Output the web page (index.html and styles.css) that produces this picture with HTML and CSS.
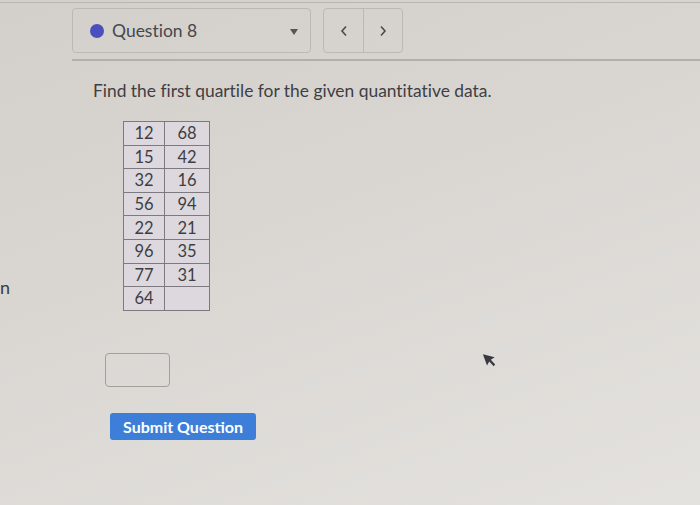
FILE: index.html
```html
<!DOCTYPE html>
<html>
<head>
<meta charset="utf-8">
<link rel="stylesheet" href="styles.css">
</head>
<body>
<div class="page">
  <div class="topline"></div>
  <div class="header">
    <div class="qselect">
      <span class="dot"></span>
      <span class="qtitle">Question 8</span>
      <span class="caret"></span>
    </div>
    <div class="nav">
      <div class="navbtn"><svg width="8" height="12" viewBox="0 0 8 12"><path d="M6 1.5 L2 6 L6 10.5" fill="none" stroke="#4a4a50" stroke-width="1.6"/></svg></div>
      <div class="navbtn"><svg width="8" height="12" viewBox="0 0 8 12"><path d="M2 1.5 L6 6 L2 10.5" fill="none" stroke="#4a4a50" stroke-width="1.6"/></svg></div>
    </div>
  </div>
  <div class="rule"></div>
  <div class="content">
    <p class="question">Find the first quartile for the given quantitative data.</p>
    <table class="data">
      <tr><td>12</td><td>68</td></tr>
      <tr><td>15</td><td>42</td></tr>
      <tr><td>32</td><td>16</td></tr>
      <tr><td>56</td><td>94</td></tr>
      <tr><td>22</td><td>21</td></tr>
      <tr><td>96</td><td>35</td></tr>
      <tr><td>77</td><td>31</td></tr>
      <tr><td>64</td><td></td></tr>
    </table>
    <div class="answer"></div>
    <button class="submit">Submit Question</button>
  </div>
  <span class="edge">n</span>
  <svg class="cursor" width="14" height="18" viewBox="0 0 14 18"><path d="M2 2 L12 9 L7.5 10 L10 16 L8 17 L5.5 11 L2 14 Z" fill="#3a3a3e" transform="rotate(-20 7 9)"/></svg>
</div>
</body>
</html>
```
FILE: styles.css
```css
html, body {
  margin: 0;
  padding: 0;
}
body {
  width: 700px;
  height: 505px;
  overflow: hidden;
  background: linear-gradient(160deg, #d3cfcb 0%, #d9d6d2 40%, #e4e2de 100%);
  font-family: Lato, "Open Sans", sans-serif;
  font-variant-ligatures: none;
  color: #3c3c40;
}
.page {
  position: relative;
  width: 700px;
  height: 505px;
}
.topline {
  height: 2px;
  border-bottom: 1px solid #b9b5b1;
}
.header {
  display: flex;
  padding-left: 72px;
  margin-top: 5px;
  height: 46px;
}
.qselect {
  box-sizing: border-box;
  width: 239px;
  height: 45px;
  border: 1px solid #bcb8b4;
  border-radius: 4px;
  display: flex;
  align-items: center;
  padding-left: 17px;
  padding-right: 12px;
}
.dot {
  width: 14px;
  height: 14px;
  border-radius: 50%;
  background: #4b4fbe;
  margin-right: 8px;
}
.qtitle {
  font-size: 17.5px;
  color: #47474c;
  flex: 1;
}
.caret {
  width: 0;
  height: 0;
  border-left: 4px solid transparent;
  border-right: 4px solid transparent;
  border-top: 6px solid #55555a;
  margin-top: 3px;
}
.nav {
  display: flex;
  margin-left: 12px;
  box-sizing: border-box;
  height: 45px;
  border: 1px solid #bcb8b4;
  border-radius: 4px;
}
.navbtn {
  width: 39px;
  display: flex;
  align-items: center;
  justify-content: center;
  box-sizing: border-box;
}
.navbtn + .navbtn {
  border-left: 1px solid #bcb8b4;
}
.rule {
  margin-left: 72px;
  margin-top: 5px;
  border-top: 2px solid #b3afab;
}
.content {
  padding-left: 93px;
}
.question {
  margin: 18px 0 0 0;
  font-size: 17.4px;
  line-height: 24px;
  color: #3e3e44;
}
.data {
  margin-top: 18px;
  margin-left: 30px;
  border-collapse: collapse;
  border: 1.5px solid #7c7a80;
}
.data td {
  border: 1px solid #7c7a80;
  background: #dcd8dd;
  height: 22.6px;
  padding: 0;
  text-align: center;
  font-size: 16.5px;
  line-height: 18px;
  color: #3e3e44;
}
.data td:first-child {
  width: 40px;
}
.data td:last-child {
  width: 44px;
}
.answer {
  margin-top: 42px;
  margin-left: 12px;
  width: 65px;
  height: 34px;
  box-sizing: border-box;
  border: 1.5px solid #a3a09c;
  border-radius: 4px;
}
.submit {
  display: block;
  margin-top: 26px;
  margin-left: 17px;
  width: 146px;
  height: 27px;
  background: #3d7fd8;
  border: none;
  border-radius: 3px;
  color: #fff;
  font-family: Lato, "Open Sans", sans-serif;
  font-size: 16px;
  font-weight: bold;
  padding: 0;
}
.edge {
  position: absolute;
  left: 0;
  top: 277px;
  font-size: 18px;
  line-height: 20px;
  color: #3a3a3e;
}
.cursor {
  position: absolute;
  left: 483px;
  top: 350px;
}
```
